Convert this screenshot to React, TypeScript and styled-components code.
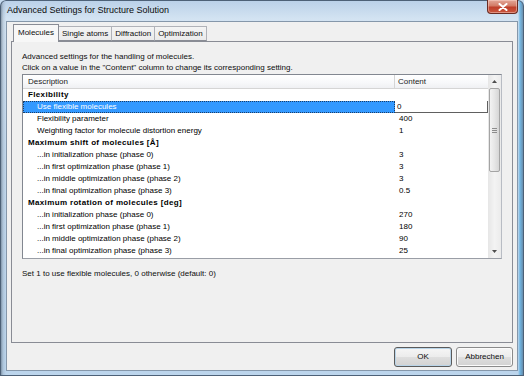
import React from 'react'
import styled, { createGlobalStyle } from 'styled-components';

const GlobalStyle = createGlobalStyle`
	html, body {
		margin: 0;
		padding: 0;
		background: #c6dbef;
	}
	* {
		box-sizing: border-box;
	}
`;

const Window = styled.div`
	width: 524px;
	height: 376px;
	display: flex;
	flex-direction: column;
	padding: 0 6px 6px 6px;
	border-radius: 6px 6px 0 0;
	background:
		linear-gradient(90deg, rgba(40, 55, 70, 0.55) 0, rgba(120, 140, 160, 0.25) 3px, transparent 6px, transparent 518px, rgba(60, 160, 220, 0.6) 520px, rgba(40, 70, 100, 0.6) 524px),
		linear-gradient(180deg, #b9d0e8 0%, #d3e3f2 5%, #c4d9ed 40%, #bcd5ec 100%);
	box-shadow: inset 0 0 0 1px #4d6177;
	font-family: "Liberation Sans", Arial, sans-serif;
	font-size: 8px;
	color: #0d0d0d;
`;

const TitleBar = styled.div`
	height: 21px;
	display: flex;
	align-items: flex-start;
	flex-shrink: 0;
`;

const TitleText = styled.div`
	font-size: 9px;
	line-height: 11px;
	margin: 5px 0 0 1px;
	color: #0a0a0a;
`;

const CloseButton = styled.div`
	margin-left: auto;
	width: 31px;
	height: 14px;
	border: 1px solid #6a2b22;
	border-top: none;
	border-radius: 0 0 4px 4px;
	background: linear-gradient(180deg, #e3a899 0%, #d27a66 45%, #bf3f2b 55%, #c9573f 100%);
	display: flex;
	align-items: center;
	justify-content: center;
	box-shadow: inset 0 0 0 1px rgba(255, 220, 210, 0.45);
`;

const Client = styled.div`
	flex: 1;
	display: flex;
	flex-direction: column;
	background: #f0f0f0;
	border: 1px solid #8597aa;
	padding: 2px 4px 3px 4px;
`;

const TabStrip = styled.div`
	height: 17px;
	display: flex;
	align-items: flex-end;
	padding-left: 2px;
	flex-shrink: 0;
`;

const Tab = styled.div<{ $active?: boolean }>`
	height: ${p => (p.$active ? '18px' : '15px')};
	margin-bottom: ${p => (p.$active ? '-1px' : '0')};
	position: relative;
	z-index: ${p => (p.$active ? 1 : 0)};
	padding: ${p => (p.$active ? '0 4px' : '0 3px')};
	line-height: ${p => (p.$active ? '16px' : '14px')};
	border: 1px solid ${p => (p.$active ? '#898c95' : '#b0b2b8')};
	border-bottom: ${p => (p.$active ? 'none' : '1px solid #898c95')};
	border-left: ${p => (p.$active ? '1px solid #898c95' : 'none')};
	background: ${p => (p.$active ? '#f7f7f7' : 'linear-gradient(180deg, #f4f4f4 0%, #ebebeb 100%)')};
	white-space: nowrap;
`;

const Panel = styled.div`
	height: 302px;
	flex-shrink: 0;
	display: flex;
	flex-direction: column;
	border: 1px solid #898c95;
	background: #f0f0f0;
	padding: 9px 10px 0 10px;
`;

const TextLine = styled.div`
	line-height: 11px;
	white-space: nowrap;
`;

const List = styled.div`
	margin-top: 1px;
	height: 185px;
	display: flex;
	border: 1px solid #828790;
	border-right-color: #b8bcc4;
	border-bottom-color: #9a9ea6;
	background: #fff;
`;

const ListMain = styled.div`
	flex: 1;
	display: flex;
	flex-direction: column;
`;

const HeaderRow = styled.div`
	height: 14px;
	display: grid;
	grid-template-columns: 371px 1fr;
	border-bottom: 1px solid #d5d5d5;
	background: linear-gradient(180deg, #ffffff 0%, #f7f8fa 60%, #eff0f3 100%);
`;

const HeaderCell = styled.div<{ $divider?: boolean }>`
	line-height: 13px;
	padding-left: ${p => (p.$divider ? '3px' : '5px')};
	border-left: ${p => (p.$divider ? '1px solid #d5d5d5' : 'none')};
	color: #1a1a1a;
`;

const Row = styled.div`
	height: 12px;
	display: grid;
	grid-template-columns: 372px 1fr;
`;

const NameCell = styled.div<{ $group?: boolean; $selected?: boolean }>`
	line-height: ${p => (p.$selected ? '10px' : '12px')};
	padding-left: ${p => (p.$group ? '5px' : p.$selected ? '13px' : '14px')};
	font-weight: ${p => (p.$group ? 700 : 400)};
	letter-spacing: ${p => (p.$group ? '0.35px' : '0')};
	color: ${p => (p.$selected ? '#fff' : '#000')};
	background: ${p => (p.$selected ? '#3399ff' : 'transparent')};
	border: ${p => (p.$selected ? '1px dotted #1b3d66' : 'none')};
	white-space: nowrap;
`;

const ValueCell = styled.div<{ $editing?: boolean }>`
	line-height: ${p => (p.$editing ? '11px' : '12px')};
	padding-left: ${p => (p.$editing ? '2px' : '4px')};
	border-right: ${p => (p.$editing ? '1px solid #606060' : 'none')};
	border-bottom: ${p => (p.$editing ? '1px solid #606060' : 'none')};
	background: #fff;
	color: #000;
`;

const ScrollBar = styled.div`
	width: 13px;
	display: flex;
	flex-direction: column;
	background: linear-gradient(90deg, #e6e6e6 0%, #f3f3f3 50%, #ebebeb 100%);
`;

const ScrollArrow = styled.div`
	height: 13px;
	display: flex;
	align-items: center;
	justify-content: center;
`;

const ScrollThumb = styled.div`
	height: 84px;
	margin: 0 1px;
	border: 1px solid #a4a4a4;
	border-radius: 2px;
	background: linear-gradient(90deg, #f3f3f3 0%, #e6e6e6 50%, #d6d6d6 100%);
	display: flex;
	align-items: center;
	justify-content: center;
`;

const ScrollSpacer = styled.div`
	flex: 1;
`;

const StatusText = styled.div`
	margin-top: 9px;
	line-height: 11px;
	white-space: nowrap;
`;

const ButtonRow = styled.div`
	margin-top: 4px;
	display: flex;
	justify-content: flex-end;
	gap: 4px;
`;

const Button = styled.div<{ $default?: boolean; $width: number }>`
	width: ${p => p.$width}px;
	height: 20px;
	line-height: 18px;
	text-align: center;
	border: 1px solid ${p => (p.$default ? '#5a5a5a' : '#8a8a8a')};
	border-radius: 3px;
	background: linear-gradient(180deg, #f6f6f6 0%, #ececec 48%, #dedede 52%, #d2d2d2 100%);
	box-shadow: inset 0 0 0 1px ${p => (p.$default ? '#b9d4e8' : '#fbfbfb')};
	color: #0d0d0d;
`;

type Item = { name: string; value?: string; group?: boolean; selected?: boolean };

const items: Item[] = [
	{ name: 'Flexibility', group: true },
	{ name: 'Use flexible molecules', value: '0', selected: true },
	{ name: 'Flexibility parameter', value: '400' },
	{ name: 'Weighting factor for molecule distortion energy', value: '1' },
	{ name: 'Maximum shift of molecules [Å]', group: true },
	{ name: '...in initialization phase (phase 0)', value: '3' },
	{ name: '...in first optimization phase (phase 1)', value: '3' },
	{ name: '...in middle optimization phase (phase 2)', value: '3' },
	{ name: '...in final optimization phase (phase 3)', value: '0.5' },
	{ name: 'Maximum rotation of molecules [deg]', group: true },
	{ name: '...in initialization phase (phase 0)', value: '270' },
	{ name: '...in first optimization phase (phase 1)', value: '180' },
	{ name: '...in middle optimization phase (phase 2)', value: '90' },
	{ name: '...in final optimization phase (phase 3)', value: '25' },
];

const tabs = ['Molecules', 'Single atoms', 'Diffraction', 'Optimization'];

const App = () => {
	return (
		<>
			<GlobalStyle />
			<Window>
				<TitleBar>
					<TitleText>Advanced Settings for Structure Solution</TitleText>
					<CloseButton>
						<svg width="10" height="8" viewBox="0 0 10 8">
							<path d="M1.5 1 L8.5 7 M8.5 1 L1.5 7" stroke="#fff" strokeWidth="2" strokeLinecap="round" />
						</svg>
					</CloseButton>
				</TitleBar>
				<Client>
					<TabStrip>
						{tabs.map((t, i) => (
							<Tab key={t} $active={i === 0}>{t}</Tab>
						))}
					</TabStrip>
					<Panel>
						<TextLine>Advanced settings for the handling of molecules.</TextLine>
						<TextLine>Click on a value in the "Content" column to change its corresponding setting.</TextLine>
						<List>
							<ListMain>
								<HeaderRow>
									<HeaderCell>Description</HeaderCell>
									<HeaderCell $divider>Content</HeaderCell>
								</HeaderRow>
								{items.map((it, i) => (
									<Row key={i}>
										<NameCell $group={it.group} $selected={it.selected}>{it.name}</NameCell>
										<ValueCell $editing={it.selected}>{it.value ?? ''}</ValueCell>
									</Row>
								))}
							</ListMain>
							<ScrollBar>
								<ScrollArrow>
									<svg width="5" height="3" viewBox="0 0 5 3">
										<path d="M0 3 L2.5 0 L5 3 Z" fill="#4d4d4d" />
									</svg>
								</ScrollArrow>
								<ScrollThumb>
									<svg width="5" height="5" viewBox="0 0 5 5">
										<path d="M0 0.5 H5 M0 2.5 H5 M0 4.5 H5" stroke="#8c8c8c" strokeWidth="1" />
									</svg>
								</ScrollThumb>
								<ScrollSpacer />
								<ScrollArrow>
									<svg width="5" height="3" viewBox="0 0 5 3">
										<path d="M0 0 L2.5 3 L5 0 Z" fill="#4d4d4d" />
									</svg>
								</ScrollArrow>
							</ScrollBar>
						</List>
						<StatusText>Set 1 to use flexible molecules, 0 otherwise (default: 0)</StatusText>
					</Panel>
					<ButtonRow>
						<Button $default $width={58}>OK</Button>
						<Button $width={57}>Abbrechen</Button>
					</ButtonRow>
				</Client>
			</Window>
		</>
	)
}

export default App
